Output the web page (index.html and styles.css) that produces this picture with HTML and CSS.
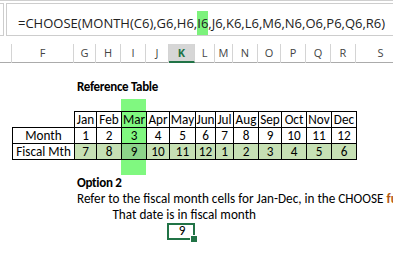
FILE: index.html
```html
<!DOCTYPE html>
<html lang="en">
<head>
<meta charset="utf-8">
<title>Fiscal month lookup</title>
<link rel="stylesheet" href="styles.css">
</head>
<body>
<div class="app">
  <div class="formula-bar">
    <div class="name-box"></div>
    <div class="formula-input"><span class="ref">=CHOOSE(MONTH(C6),G6,H6,</span><span class="ref ref-hit">I6</span><span class="ref">,J6,K6,L6,M6,N6,O6,P6,Q6,R6)</span></div>
  </div>

  <div class="col-headers">
    <div class="ch"></div>
    <div class="ch">F</div>
    <div class="ch">G</div>
    <div class="ch">H</div>
    <div class="ch">I</div>
    <div class="ch">J</div>
    <div class="ch ch-active">K</div>
    <div class="ch">L</div>
    <div class="ch">M</div>
    <div class="ch">N</div>
    <div class="ch">O</div>
    <div class="ch">P</div>
    <div class="ch">Q</div>
    <div class="ch">R</div>
    <div class="ch">S</div>
  </div>

  <div class="sheet">
    <div class="col-mark"></div>

    <div class="title" style="grid-row:2">Reference Table</div>

    <!-- month names -->
    <div class="tc top" style="grid-row:4;grid-column:3">Jan</div>
    <div class="tc top" style="grid-row:4;grid-column:4">Feb</div>
    <div class="tc top" style="grid-row:4;grid-column:5">Mar</div>
    <div class="tc top" style="grid-row:4;grid-column:6">Apr</div>
    <div class="tc top" style="grid-row:4;grid-column:7">May</div>
    <div class="tc top" style="grid-row:4;grid-column:8">Jun</div>
    <div class="tc top" style="grid-row:4;grid-column:9">Jul</div>
    <div class="tc top" style="grid-row:4;grid-column:10">Aug</div>
    <div class="tc top" style="grid-row:4;grid-column:11">Sep</div>
    <div class="tc top" style="grid-row:4;grid-column:12">Oct</div>
    <div class="tc top" style="grid-row:4;grid-column:13">Nov</div>
    <div class="tc top" style="grid-row:4;grid-column:14">Dec</div>

    <!-- calendar month numbers -->
    <div class="tc label" style="grid-row:5;grid-column:2">Month</div>
    <div class="tc" style="grid-row:5;grid-column:3">1</div>
    <div class="tc" style="grid-row:5;grid-column:4">2</div>
    <div class="tc" style="grid-row:5;grid-column:5">3</div>
    <div class="tc" style="grid-row:5;grid-column:6">4</div>
    <div class="tc" style="grid-row:5;grid-column:7">5</div>
    <div class="tc" style="grid-row:5;grid-column:8">6</div>
    <div class="tc" style="grid-row:5;grid-column:9">7</div>
    <div class="tc" style="grid-row:5;grid-column:10">8</div>
    <div class="tc" style="grid-row:5;grid-column:11">9</div>
    <div class="tc" style="grid-row:5;grid-column:12">10</div>
    <div class="tc" style="grid-row:5;grid-column:13">11</div>
    <div class="tc" style="grid-row:5;grid-column:14">12</div>

    <!-- fiscal month numbers -->
    <div class="tc label" style="grid-row:6;grid-column:2">Fiscal Mth</div>
    <div class="tc fiscal" style="grid-row:6;grid-column:3">7</div>
    <div class="tc fiscal" style="grid-row:6;grid-column:4">8</div>
    <div class="tc fiscal fiscal-hit" style="grid-row:6;grid-column:5">9</div>
    <div class="tc fiscal" style="grid-row:6;grid-column:6">10</div>
    <div class="tc fiscal" style="grid-row:6;grid-column:7">11</div>
    <div class="tc fiscal" style="grid-row:6;grid-column:8">12</div>
    <div class="tc fiscal" style="grid-row:6;grid-column:9">1</div>
    <div class="tc fiscal" style="grid-row:6;grid-column:10">2</div>
    <div class="tc fiscal" style="grid-row:6;grid-column:11">3</div>
    <div class="tc fiscal" style="grid-row:6;grid-column:12">4</div>
    <div class="tc fiscal" style="grid-row:6;grid-column:13">5</div>
    <div class="tc fiscal" style="grid-row:6;grid-column:14">6</div>

    <div class="title" style="grid-row:8">Option 2</div>
    <div class="note" style="grid-row:9">Refer to the fiscal month cells for Jan-Dec, in the CHOOSE <span class="fn">function</span></div>
    <div class="prompt" style="grid-row:10">That date is in fiscal month</div>
    <div class="result" style="grid-row:11">9</div>
  </div>
</div>
</body>
</html>
```

FILE: styles.css
```css
* { box-sizing: border-box; }

html, body {
  margin: 0;
  padding: 0;
  background: #fff;
}

body {
  width: 393px;
  height: 270px;
  overflow: hidden;
}

.app {
  width: 420px;
  border-top: 1px solid #cfcfcf;
}

/* formula bar */
.formula-bar {
  display: flex;
  gap: 2px;
  height: 35px;
  padding-top: 2px;
}

.name-box {
  width: 4px;
  border: 1px solid #cdcdcd;
  border-left: 0;
}

.formula-input {
  flex: 1;
  border: 1px solid #cdcdcd;
  border-right: 0;
  padding: 7px 0 0 11px;
  font-family: "Open Sans", "Noto Sans", sans-serif;
  font-size: 13px;
  line-height: 25px;
  color: #222;
  white-space: nowrap;
  display: flex;
  align-items: stretch;
}

.ref-hit {
  background: #7cf27c;
}

/* column letters */
.col-headers {
  display: grid;
  grid-template-columns: 12px 62px 22px 25px 25px 23px 26px 20px 18px 25px 23px 25px 25px 25px 50px;
  height: 27px;
  padding-top: 8px;
  border-bottom: 1px solid #ababab;
}

.ch {
  border-right: 1px solid #d4d4d4;
  font-family: "Open Sans", "Noto Sans", sans-serif;
  font-size: 11px;
  line-height: 18px;
  color: #444;
  text-align: center;
}

.ch-active {
  background: #d6d6d6;
  border-bottom: 2px solid #217346;
  color: #217346;
  font-weight: 700;
  line-height: 17px;
}

/* worksheet body */
.sheet {
  display: grid;
  grid-template-columns: 12px 62px 22px 25px 25px 23px 26px 20px 18px 25px 23px 25px 25px 25px 50px;
  grid-auto-rows: 16px;
  font-family: Carlito, Lato, "Liberation Sans", sans-serif;
  font-size: 13.2px;
  color: #000;
}

.col-mark {
  grid-column: 5;
  grid-row: 3 / 8;
  margin-top: 4px;
  background: #80f880;
}

.title {
  grid-column: 3 / 12;
  padding-left: 3px;
  font-size: 13px;
  font-weight: 700;
  letter-spacing: -0.3px;
  line-height: 16px;
  white-space: nowrap;
}

.tc {
  border: 1px solid #000;
  margin: 0 -1px -1px 0;
  text-align: center;
  line-height: 15px;
  white-space: nowrap;
}

.label { background: #fff; }

.fiscal { background: #c6e0b4; }

.fiscal-hit { background: #8cd48a; }

.note {
  grid-column: 3 / 16;
  padding-left: 3px;
  line-height: 16px;
  white-space: nowrap;
}

.fn {
  color: #b35a12;
  font-weight: 700;
}

.prompt {
  grid-column: 3 / 11;
  text-align: right;
  padding-right: 2px;
  line-height: 16px;
  white-space: nowrap;
}

.result {
  grid-column: 7;
  position: relative;
  text-align: center;
  line-height: 16px;
}

/* active-cell frame with fill handle */
.result::after {
  content: "";
  position: absolute;
  left: -2px;
  top: 0;
  right: 0;
  bottom: -1px;
  border: 2px solid #217346;
}

.result::before {
  content: "";
  position: absolute;
  right: -3px;
  bottom: -4px;
  width: 6px;
  height: 6px;
  background: #217346;
  border: 1px solid #fff;
  z-index: 1;
}
```
